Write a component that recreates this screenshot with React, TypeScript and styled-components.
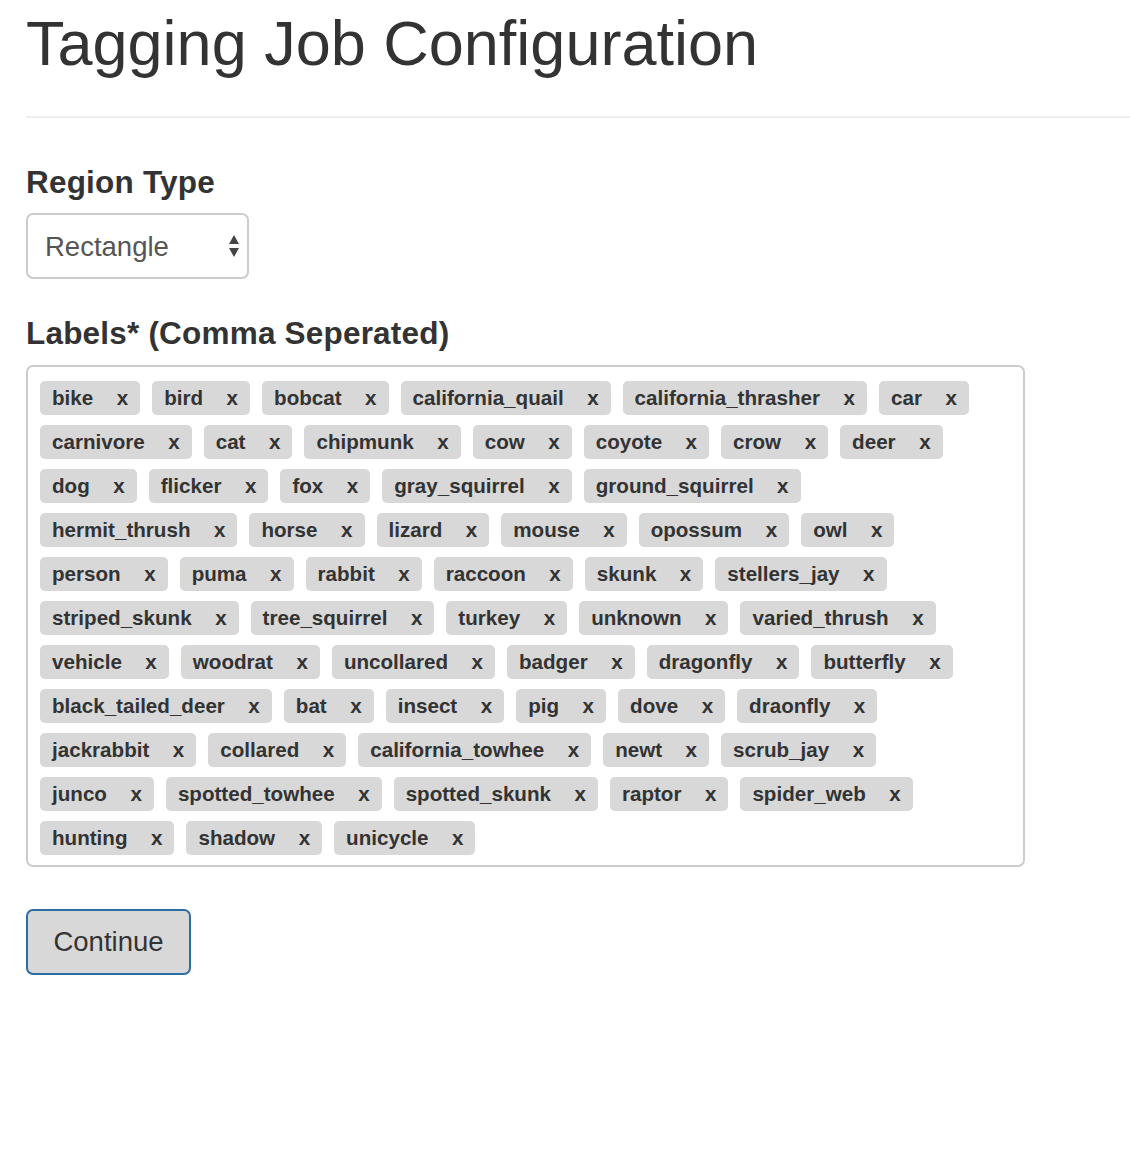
import React, { useState } from "react";
import styled, { createGlobalStyle } from "styled-components";

const initialLabels = [
    "bike", "bird", "bobcat", "california_quail", "california_thrasher", "car",
    "carnivore", "cat", "chipmunk", "cow", "coyote", "crow", "deer",
    "dog", "flicker", "fox", "gray_squirrel", "ground_squirrel",
    "hermit_thrush", "horse", "lizard", "mouse", "opossum", "owl",
    "person", "puma", "rabbit", "raccoon", "skunk", "stellers_jay",
    "striped_skunk", "tree_squirrel", "turkey", "unknown", "varied_thrush",
    "vehicle", "woodrat", "uncollared", "badger", "dragonfly", "butterfly",
    "black_tailed_deer", "bat", "insect", "pig", "dove", "draonfly",
    "jackrabbit", "collared", "california_towhee", "newt", "scrub_jay",
    "junco", "spotted_towhee", "spotted_skunk", "raptor", "spider_web",
    "hunting", "shadow", "unicycle",
];

const GlobalStyle = createGlobalStyle`
    body {
        margin: 0;
        background: #fff;
        color: #333;
        font-family: "Liberation Sans", Arial, Helvetica, sans-serif;
    }
`;

export default function App() {
    const [regionType, setRegionType] = useState<string>("Rectangle");
    const [labels, setLabels] = useState<string[]>(initialLabels);

    const removeLabel = (label: string) => {
        setLabels(labels.filter((l) => l !== label));
    };

    return (
        <Page>
            <GlobalStyle />
            <Title>Tagging Job Configuration</Title>
            <Divider />
            <FieldHeader>Region Type</FieldHeader>
            <SelectWrap>
                <StyledSelect value={regionType} onChange={(e) => setRegionType(e.target.value)}>
                    <option>Rectangle</option>
                    <option>Polygon</option>
                    <option>Point</option>
                </StyledSelect>
                <SelectArrows width="10" height="22" viewBox="0 0 10 22">
                    <path d="M5 0 L10 9 L0 9 Z" fill="#444" />
                    <path d="M0 13 L10 13 L5 22 Z" fill="#444" />
                </SelectArrows>
            </SelectWrap>
            <FieldHeader $spaced>Labels* (Comma Seperated)</FieldHeader>
            <TagBox>
                {labels.map((label) => (
                    <Tag key={label}>
                        {label}
                        <RemoveTag onClick={() => removeLabel(label)}>x</RemoveTag>
                    </Tag>
                ))}
            </TagBox>
            <ContinueButton>Continue</ContinueButton>
        </Page>
    );
}

const Page = styled.div`
    display: flex;
    flex-direction: column;
    align-items: flex-start;
    padding: 9px 0 60px 26px;
`;

const Title = styled.h1`
    margin: 0;
    font-size: 63px;
    line-height: 69px;
    font-weight: normal;
    color: #333;
`;

const Divider = styled.hr`
    align-self: stretch;
    margin: 38px 0 0 0;
    border: none;
    border-top: 2px solid #eee;
    height: 0;
`;

const FieldHeader = styled.h4<{ $spaced?: boolean }>`
    margin: ${(p) => (p.$spaced ? "37px" : "47px")} 0 0 0;
    font-size: 31.5px;
    line-height: 34px;
    font-weight: bold;
    color: #333;
    letter-spacing: 0.2px;
`;

const SelectWrap = styled.div`
    position: relative;
    margin-top: 14px;
`;

const StyledSelect = styled.select`
    appearance: none;
    -webkit-appearance: none;
    width: 223px;
    height: 66px;
    padding: 0 40px 0 17px;
    border: 2px solid #ccc;
    border-radius: 7px;
    background: #fff;
    color: #555;
    font-family: "Liberation Sans", Arial, sans-serif;
    font-size: 27.5px;
    outline: none;
`;

const SelectArrows = styled.svg`
    position: absolute;
    right: 10px;
    top: 22px;
    pointer-events: none;
`;

const TagBox = styled.div`
    box-sizing: border-box;
    width: 999px;
    margin-top: 15px;
    padding: 14px 33px 10px 12px;
    border: 2px solid #ccc;
    border-radius: 7px;
    display: flex;
    flex-wrap: wrap;
    column-gap: 12px;
    row-gap: 10px;
`;

const Tag = styled.span`
    display: inline-flex;
    align-items: center;
    height: 34px;
    padding: 0 12px;
    background: #d8d8d8;
    border-radius: 5px;
    color: #333;
    font-size: 20.6px;
    font-weight: bold;
    white-space: nowrap;
`;

const RemoveTag = styled.span`
    margin-left: 23.5px;
    cursor: pointer;
`;

const ContinueButton = styled.button`
    margin-top: 42px;
    width: 165px;
    height: 66px;
    border: 2px solid #2e6da4;
    border-radius: 7px;
    background: #d8d8d8;
    color: #333;
    font-family: "Liberation Sans", Arial, sans-serif;
    font-size: 27.5px;
    cursor: pointer;
`;
